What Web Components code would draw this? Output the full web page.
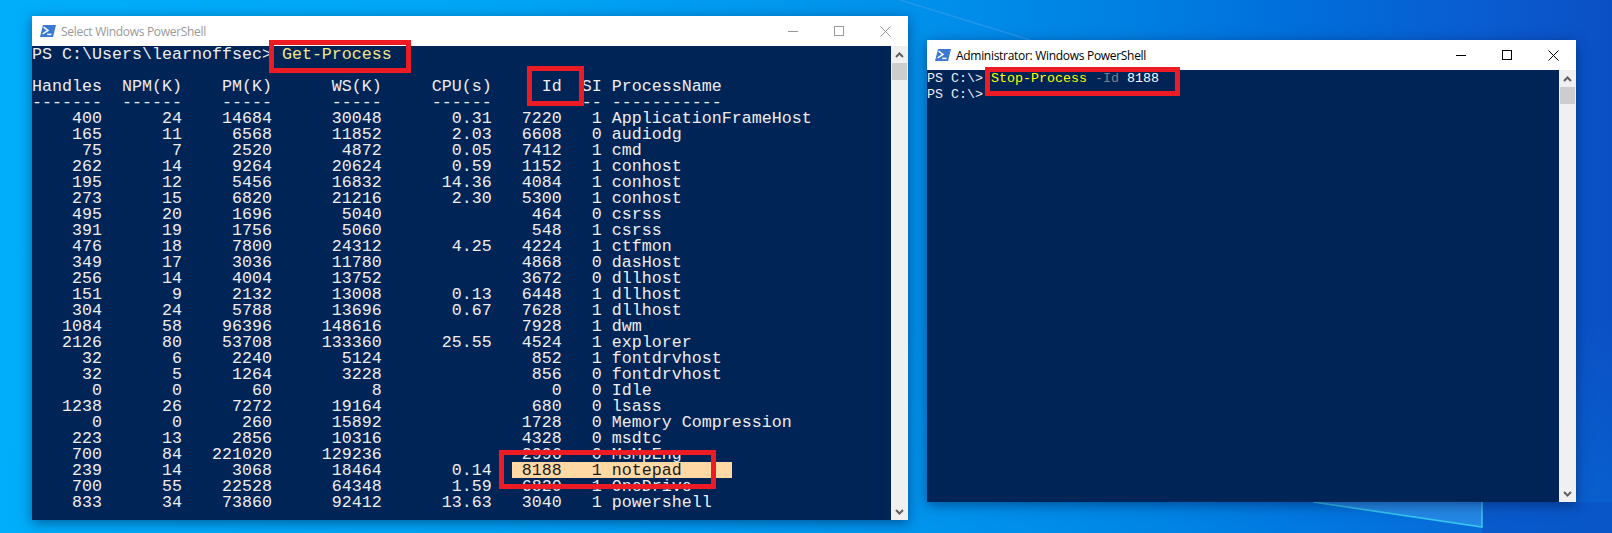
<!DOCTYPE html>
<html>
<head>
<meta charset="utf-8">
<title>PowerShell windows</title>
<style>
  html, body { margin: 0; padding: 0; height: 100%; overflow: hidden; }
  .hl { display: inline-block; height: 16px; vertical-align: top; background: #ffd8a4; color: #1a1a1a; }
</style>
</head>
<body>
<template id="ps-desktop-tpl">
  <style>
    :host {
      display: block;
      position: relative;
      width: 1612px;
      height: 533px;
      overflow: hidden;
      background:
        linear-gradient(180deg, rgba(0, 0, 0, 0) 0 60%, rgba(0, 170, 250, .18) 100%),
        linear-gradient(90deg, #00aefa 0, #00a6f7 30%, #0092ec 56%, #0080e2 70%, #006fdb 80%, #0a5cd0 92%, #0a50c4 100%);
    }
    svg { position: absolute; left: 0; top: 0; }
  </style>
  <svg width="1612" height="533" viewBox="0 0 1612 533">
    <!-- pane of the wallpaper logo, only its edges show round the windows -->
    <path d="M1313 502 L1482 527 L1482 502 Z" fill="#2f92e8" opacity=".75"/>
    <path d="M1482 533 H1612 V502 H1482 Z" fill="#0a4fc2" opacity=".55"/>
    <path d="M1313 502 L1482 527 L1482 502" fill="none" stroke="#3dd4ee" stroke-width="1.6" opacity=".85"/>
    <path d="M900 0 L1030 40" fill="none" stroke="#2b98ec" stroke-width="1.5" opacity=".8"/>
  </svg>
  <slot></slot>
</template>

<template id="ps-window-tpl">
  <style>
    :host {
      display: flex;
      flex-direction: column;
      position: absolute;
      background: #fff;
      box-shadow: 0 3px 12px rgba(0, 20, 70, .5);
    }
    .bar {
      flex: none;
      height: 30px;
      display: flex;
      align-items: center;
      font: 12px "Open Sans", "Noto Sans", sans-serif;
      letter-spacing: -.3px;
      color: var(--title, #000);
    }
    .icon { margin: 0 5px 0 8px; flex: none; }
    .name { flex: 1; white-space: nowrap; }
    .btn { width: 46px; height: 100%; display: flex; align-items: center; justify-content: center; flex: none; }
    .btn svg { display: block; }
    .body { flex: 1; display: flex; min-height: 0; }
    .console {
      flex: 1;
      min-width: 0;
      background: #012456;
      color: #eeedf0;
      font-family: "Liberation Mono", monospace;
      overflow: hidden;
    }
    .scroll {
      flex: none;
      width: 17px;
      background: #f0f0f0;
      display: flex;
      flex-direction: column;
      align-items: center;
    }
    .arrow { height: 17px; flex: none; display: flex; align-items: center; justify-content: center; }
    .thumb { width: 15px; height: 17px; background: #cdcdcd; flex: none; }
    .gap { flex: 1; }
  </style>
  <div class="bar">
    <svg class="icon" width="16" height="12" viewBox="0 0 16 12">
      <path d="M3 0 H16 L13 12 H0 Z" fill="#3b78d4"/>
      <path d="M3.6 2.2 L8 5.4 L2.6 9" fill="none" stroke="#fff" stroke-width="1.5"/>
      <path d="M7.2 9.4 H11.4" stroke="#fff" stroke-width="1.5"/>
    </svg>
    <span class="name"><slot name="title"></slot></span>
    <span class="btn"><svg width="11" height="11" viewBox="0 0 11 11"><path d="M0 5.5 H10" stroke="currentColor" fill="none"/></svg></span>
    <span class="btn"><svg width="11" height="11" viewBox="0 0 11 11"><rect x=".5" y=".5" width="9" height="9" stroke="currentColor" fill="none"/></svg></span>
    <span class="btn"><svg width="11" height="11" viewBox="0 0 11 11"><path d="M.5 .5 L10.5 10.5 M10.5 .5 L.5 10.5" stroke="currentColor" fill="none"/></svg></span>
  </div>
  <div class="body">
    <div class="console"><slot></slot></div>
    <div class="scroll">
      <div class="arrow"><svg width="9" height="6" viewBox="0 0 9 6"><path d="M1 5 L4.5 1.5 L8 5" fill="none" stroke="#606060" stroke-width="2"/></svg></div>
      <div class="thumb"></div>
      <div class="gap"></div>
      <div class="arrow"><svg width="9" height="6" viewBox="0 0 9 6"><path d="M1 1 L4.5 4.5 L8 1" fill="none" stroke="#606060" stroke-width="2"/></svg></div>
    </div>
  </div>
</template>

<template id="ps-lines-tpl">
  <style>
    :host {
      display: block;
      font-size: var(--cell-font, 16.67px);
    }
    /* rows are 16px apart, the taller line box drops the glyphs by 1px */
    ::slotted(*) { display: block; height: 16px; line-height: 18px; white-space: pre; }
  </style>
  <slot></slot>
</template>

<template id="red-box-tpl">
  <style>
    :host {
      display: block;
      position: absolute;
      box-sizing: border-box;
      border: 5px solid #ed1c24;
    }
  </style>
</template>

<ps-desktop>
  <ps-window style="left:32px;top:16px;width:876px;height:504px;--title:#999">
    <span slot="title">Select Windows PowerShell</span>
    <ps-lines id="left"></ps-lines>
  </ps-window>
  <ps-window style="left:927px;top:40px;width:649px;height:462px;--title:#000">
    <span slot="title">Administrator: Windows PowerShell</span>
    <ps-lines id="right" style="--cell-font:13.33px">
      <div>PS C:\&gt; <span style="color:#ff0">Stop-Process</span> <span style="color:#808080">-Id</span> <span style="color:#fff">8188</span></div>
      <div>PS C:\&gt;</div>
    </ps-lines>
  </ps-window>
  <red-box style="left:269px;top:40px;width:142px;height:33px"></red-box>
  <red-box style="left:527px;top:66px;width:57px;height:40px"></red-box>
  <red-box style="left:499px;top:450px;width:217px;height:39px"></red-box>
  <red-box style="left:985px;top:67px;width:195px;height:29px"></red-box>
</ps-desktop>

<script>
  // plain helper: every element clones its template into an open shadow root
  function define(name, tplId) {
    customElements.define(name, class extends HTMLElement {
      constructor() {
        super();
        this.attachShadow({ mode: "open" });
        this.shadowRoot.appendChild(document.getElementById(tplId).content.cloneNode(true));
      }
    });
  }
  define("ps-desktop", "ps-desktop-tpl");
  define("ps-window", "ps-window-tpl");
  define("ps-lines", "ps-lines-tpl");
  define("red-box", "red-box-tpl");

  const rows = [
    [400, 24, 14684, 30048, "0.31", 7220, 1, "ApplicationFrameHost"],
    [165, 11, 6568, 11852, "2.03", 6608, 0, "audiodg"],
    [75, 7, 2520, 4872, "0.05", 7412, 1, "cmd"],
    [262, 14, 9264, 20624, "0.59", 1152, 1, "conhost"],
    [195, 12, 5456, 16832, "14.36", 4084, 1, "conhost"],
    [273, 15, 6820, 21216, "2.30", 5300, 1, "conhost"],
    [495, 20, 1696, 5040, "", 464, 0, "csrss"],
    [391, 19, 1756, 5060, "", 548, 1, "csrss"],
    [476, 18, 7800, 24312, "4.25", 4224, 1, "ctfmon"],
    [349, 17, 3036, 11780, "", 4868, 0, "dasHost"],
    [256, 14, 4004, 13752, "", 3672, 0, "dllhost"],
    [151, 9, 2132, 13008, "0.13", 6448, 1, "dllhost"],
    [304, 24, 5788, 13696, "0.67", 7628, 1, "dllhost"],
    [1084, 58, 96396, 148616, "", 7928, 1, "dwm"],
    [2126, 80, 53708, 133360, "25.55", 4524, 1, "explorer"],
    [32, 6, 2240, 5124, "", 852, 1, "fontdrvhost"],
    [32, 5, 1264, 3228, "", 856, 0, "fontdrvhost"],
    [0, 0, 60, 8, "", 0, 0, "Idle"],
    [1238, 26, 7272, 19164, "", 680, 0, "lsass"],
    [0, 0, 260, 15892, "", 1728, 0, "Memory Compression"],
    [223, 13, 2856, 10316, "", 4328, 0, "msdtc"],
    [700, 84, 221020, 129236, "", 2996, 0, "MsMpEng"],
    [239, 14, 3068, 18464, "0.14", 8188, 1, "notepad"],
    [700, 55, 22528, 64348, "1.59", 6820, 1, "OneDrive"],
    [833, 34, 73860, 92412, "13.63", 3040, 1, "powershell"]
  ];

  // fixed console columns, same widths as the Format-Table output
  function fmt(r) {
    return String(r[0]).padStart(7) + String(r[1]).padStart(8) + String(r[2]).padStart(9) +
      String(r[3]).padStart(11) + String(r[4]).padStart(11) + String(r[5]).padStart(7) +
      String(r[6]).padStart(4) + " " + r[7];
  }

  const left = document.getElementById("left");
  function addLine(html) {
    const d = document.createElement("div");
    d.innerHTML = html;
    left.appendChild(d);
  }
  addLine('PS C:\\Users\\learnoffsec&gt; <span style="color:#efe68c">Get-Process</span>');
  addLine(" ");
  addLine("Handles  NPM(K)    PM(K)      WS(K)     CPU(s)     Id  SI ProcessName");
  addLine("-------  ------    -----      -----     ------     --  -- -----------");
  rows.forEach(r => {
    const s = fmt(r);
    if (r[7] === "notepad") {
      // the highlighted part runs from col 48 to col 70
      addLine(s.slice(0, 48) + '<span class="hl">' + s.slice(48).padEnd(22) + "</span>");
    } else {
      addLine(s);
    }
  });
</script>
</body>
</html>
